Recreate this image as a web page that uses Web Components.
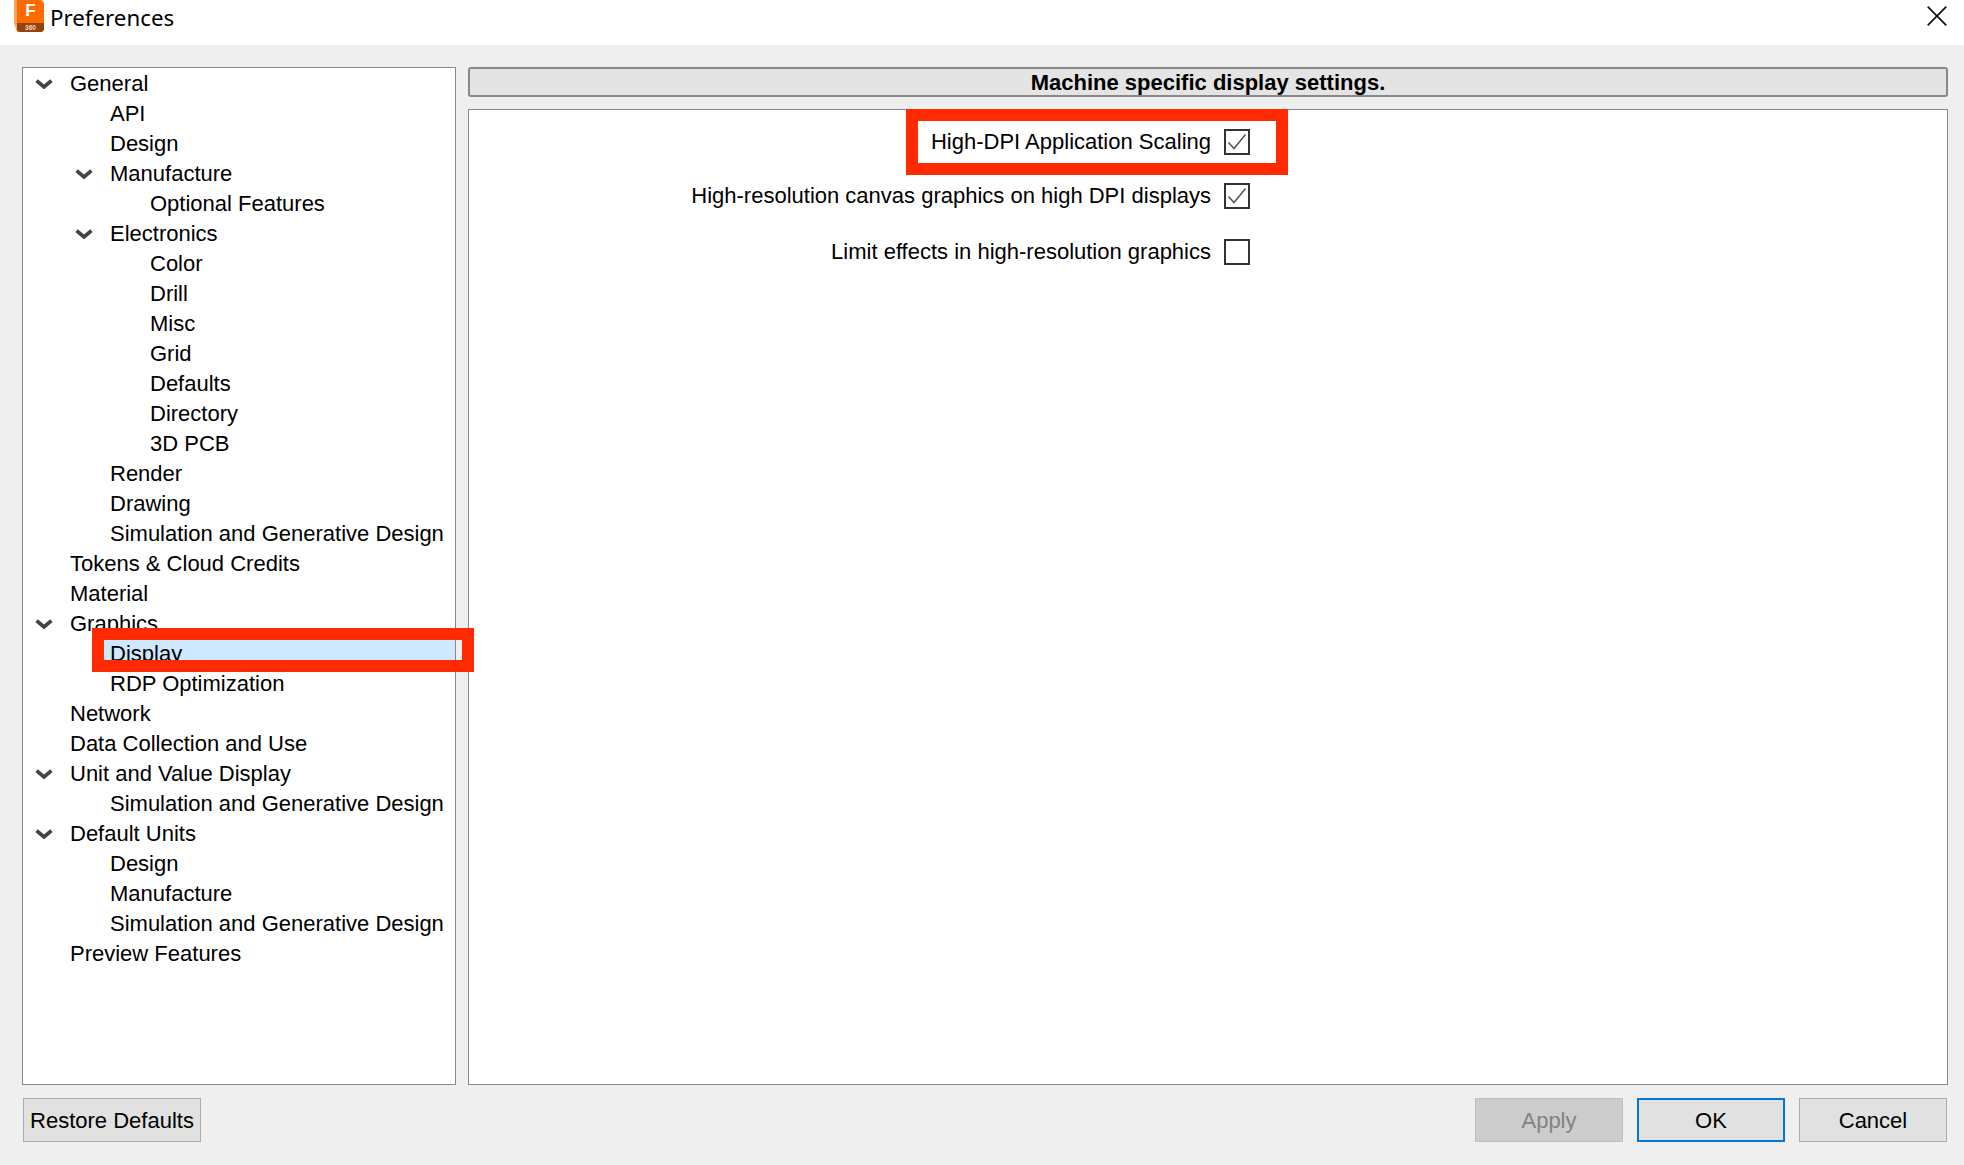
<!DOCTYPE html>
<html>
<head>
<meta charset="utf-8">
<title>Preferences</title>
<style>
  html, body { margin: 0; height: 100%; background: #efefef; }
  body { font-family: "Liberation Sans", Arial, sans-serif; color: #000; overflow: hidden; }
</style>
</head>
<body>
<pref-dialog>
  <title-bar slot="title">Preferences</title-bar>

  <tree-view slot="tree">
    <tree-row open>General</tree-row>
    <tree-row level="1">API</tree-row>
    <tree-row level="1">Design</tree-row>
    <tree-row level="1" open>Manufacture</tree-row>
    <tree-row level="2">Optional Features</tree-row>
    <tree-row level="1" open>Electronics</tree-row>
    <tree-row level="2">Color</tree-row>
    <tree-row level="2">Drill</tree-row>
    <tree-row level="2">Misc</tree-row>
    <tree-row level="2">Grid</tree-row>
    <tree-row level="2">Defaults</tree-row>
    <tree-row level="2">Directory</tree-row>
    <tree-row level="2">3D PCB</tree-row>
    <tree-row level="1">Render</tree-row>
    <tree-row level="1">Drawing</tree-row>
    <tree-row level="1">Simulation and Generative Design</tree-row>
    <tree-row>Tokens &amp; Cloud Credits</tree-row>
    <tree-row>Material</tree-row>
    <tree-row open>Graphics</tree-row>
    <tree-row level="1" selected>Display</tree-row>
    <tree-row level="1">RDP Optimization</tree-row>
    <tree-row>Network</tree-row>
    <tree-row>Data Collection and Use</tree-row>
    <tree-row open>Unit and Value Display</tree-row>
    <tree-row level="1">Simulation and Generative Design</tree-row>
    <tree-row open>Default Units</tree-row>
    <tree-row level="1">Design</tree-row>
    <tree-row level="1">Manufacture</tree-row>
    <tree-row level="1">Simulation and Generative Design</tree-row>
    <tree-row>Preview Features</tree-row>
  </tree-view>

  <settings-panel slot="panel" heading="Machine specific display settings.">
    <check-row checked style="margin-top:19px">High-DPI Application Scaling</check-row>
    <check-row checked style="margin-top:28px">High-resolution canvas graphics on high DPI displays</check-row>
    <check-row style="margin-top:30px">Limit effects in high-resolution graphics</check-row>
  </settings-panel>

  <pref-button slot="left" style="width:178px">Restore Defaults</pref-button>
  <pref-button slot="right" disabled>Apply</pref-button>
  <pref-button slot="right" focused>OK</pref-button>
  <pref-button slot="right">Cancel</pref-button>

  <!-- red annotation frames drawn over the screenshot -->
  <red-mark slot="marks" style="left:92px;top:628px;width:382px;height:44px"></red-mark>
  <red-mark slot="marks" style="left:906px;top:109px;width:382px;height:66px"></red-mark>
</pref-dialog>

<script>
class PrefDialog extends HTMLElement {
  constructor() {
    super();
    const shadow = this.attachShadow({ mode: 'open' });
    shadow.innerHTML = `
      <style>
        :host { display: flex; flex-direction: column; position: relative; width: 1964px; height: 1165px; }
        .main { display: grid; grid-template-columns: 434px 1480px; column-gap: 12px; padding: 22px 16px 0 22px; height: 1018px; }
        .foot { display: flex; justify-content: space-between; padding: 13px 17px 0 23px; }
        .right { display: flex; gap: 14px; }
      </style>
      <slot name="title"></slot>
      <div class="main">
        <slot name="tree"></slot>
        <slot name="panel"></slot>
      </div>
      <div class="foot">
        <slot name="left"></slot>
        <div class="right"><slot name="right"></slot></div>
      </div>
      <slot name="marks"></slot>
    `;
  }
}
customElements.define('pref-dialog', PrefDialog);

class TitleBar extends HTMLElement {
  constructor() {
    super();
    const shadow = this.attachShadow({ mode: 'open' });
    shadow.innerHTML = `
      <style>
        :host { display: flex; align-items: flex-start; height: 45px; background: #fff; flex: none; padding: 0 17px 0 14px; }
        .logo { width: 30px; height: 32px; flex: none; }
        .name { font: 22.3px/36px "Noto Sans", sans-serif; margin-left: 6px; flex: 1; }
        .close { width: 20px; height: 20px; margin-top: 6px; }
      </style>
      <svg class="logo" viewBox="0 0 30 32">
        <path d="M4 0H0v23l3 9h2z" fill="#ff9f5a"/>
        <path d="M3 0h24l3 3v21H3z" fill="#ff6a00"/>
        <path d="M3 23h27v7l-2 2H5l-2-2z" fill="#96440f"/>
        <text x="16.5" y="16" font-family="Liberation Sans" font-weight="700" font-size="17" fill="#fff" text-anchor="middle">F</text>
        <text x="16.5" y="30" font-family="Liberation Sans" font-weight="700" font-size="6.5" fill="#f3d9c6" text-anchor="middle">360</text>
      </svg>
      <span class="name"><slot></slot></span>
      <svg class="close" viewBox="0 0 20 20"><path d="M.7.7l18.6 18.6M19.3.7L.7 19.3" stroke="#111" stroke-width="1.7" fill="none"/></svg>
    `;
  }
}
customElements.define('title-bar', TitleBar);

class TreeView extends HTMLElement {
  constructor() {
    super();
    const shadow = this.attachShadow({ mode: 'open' });
    shadow.innerHTML = `
      <style>
        :host { display: block; background: #fff; border: 1px solid #828790; box-sizing: border-box; height: 1018px; overflow: hidden; }
      </style>
      <slot></slot>
    `;
  }
}
customElements.define('tree-view', TreeView);

class TreeRow extends HTMLElement {
  constructor() {
    super();
    const shadow = this.attachShadow({ mode: 'open' });
    shadow.innerHTML = `
      <style>
        :host { display: flex; align-items: center; height: 30px; font-size: 22px; white-space: nowrap; padding-left: 12px; }
        :host([level="1"]) { padding-left: 52px; }
        :host([level="2"]) { padding-left: 92px; }
        :host([selected]) { background: #cde8ff; margin-left: 75px; padding-left: 12px; }
        :host([selected]) .arrow { display: none; }
        .arrow { width: 18px; height: 10px; flex: none; margin-right: 17px; visibility: hidden; position: relative; top: 1px; }
        :host([open]) .arrow { visibility: visible; }
        span { padding-top: 2px; }
      </style>
      <svg class="arrow" viewBox="0 0 18 10"><path d="M1.6 1.6L9 8l7.4-6.4" stroke="#444" stroke-width="3.7" fill="none"/></svg>
      <span><slot></slot></span>
    `;
  }
}
customElements.define('tree-row', TreeRow);

class SettingsPanel extends HTMLElement {
  constructor() {
    super();
    const shadow = this.attachShadow({ mode: 'open' });
    shadow.innerHTML = `
      <style>
        :host { display: flex; flex-direction: column; gap: 12px; height: 1018px; }
        .head { height: 30px; box-sizing: border-box; border: 2px solid #888; border-radius: 3px; background: #e4e4e4; font-weight: 700; font-size: 22px; line-height: 27px; text-align: center; }
        .body { flex: 1; background: #fff; border: 1px solid #828790; }
      </style>
      <div class="head"></div>
      <div class="body"><slot></slot></div>
    `;
    shadow.querySelector('.head').textContent = this.getAttribute('heading');
  }
}
customElements.define('settings-panel', SettingsPanel);

class CheckRow extends HTMLElement {
  constructor() {
    super();
    const shadow = this.attachShadow({ mode: 'open' });
    shadow.innerHTML = `
      <style>
        :host { display: grid; grid-template-columns: 742px 26px; grid-template-rows: 26px; column-gap: 13px; font-size: 22px; line-height: 26px; white-space: nowrap; }
        .label { text-align: right; }
        .box { width: 26px; height: 26px; box-sizing: border-box; border: 2px solid #333; background: #fff; }
        .box svg { display: none; width: 22px; height: 22px; }
        :host([checked]) .box svg { display: block; }
      </style>
      <span class="label"><slot></slot></span>
      <div class="box"><svg viewBox="0 0 22 22"><path d="M2.5 11.5l5.5 6L19.5 3.5" stroke="#555" stroke-width="1.5" fill="none"/></svg></div>
    `;
  }
}
customElements.define('check-row', CheckRow);

class PrefButton extends HTMLElement {
  constructor() {
    super();
    const shadow = this.attachShadow({ mode: 'open' });
    shadow.innerHTML = `
      <style>
        :host { display: flex; align-items: center; justify-content: center; box-sizing: border-box; width: 148px; height: 44px; padding-top: 2px; background: #e1e1e1; border: 1px solid #adadad; font-size: 22px; }
        :host([disabled]) { background: #ccc; border-color: #bfbfbf; color: #838383; }
        :host([focused]) { border: 2px solid #0078d7; }
      </style>
      <slot></slot>
    `;
  }
}
customElements.define('pref-button', PrefButton);

class RedMark extends HTMLElement {
  constructor() {
    super();
    const shadow = this.attachShadow({ mode: 'open' });
    shadow.innerHTML = `
      <style>
        :host { display: block; position: absolute; box-sizing: border-box; border: 12px solid #ff2a00; }
      </style>
    `;
  }
}
customElements.define('red-mark', RedMark);
</script>
</body>
</html>
